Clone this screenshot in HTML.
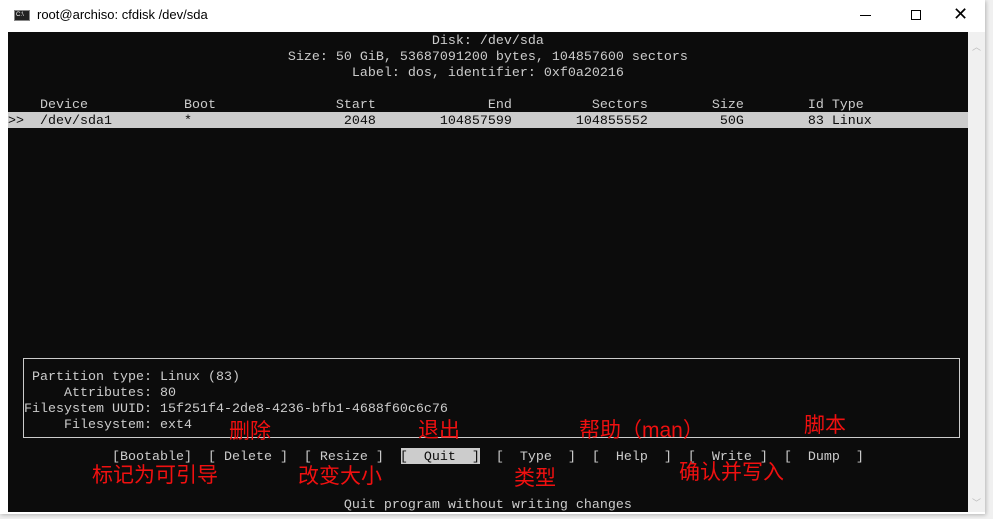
<!DOCTYPE html><html><head><meta charset="utf-8"><style>
body{margin:0;width:993px;height:519px;background:#f0f0f0;position:relative;overflow:hidden;font-family:"Liberation Sans",sans-serif}
.win{position:absolute;left:0;top:0;width:985px;height:514px;background:#fff;box-shadow:1px 1px 4px rgba(0,0,0,.25)}
.term{position:absolute;left:8px;top:32px;width:960px;height:480px;background:#0c0c0c}
.sb{position:absolute;left:968px;top:32px;width:17px;height:480px;background:#f0f0f0}
.t{position:absolute;font-family:"Liberation Mono",monospace;font-size:13.33px;line-height:16px;color:#cccccc;white-space:pre}
.r{position:absolute;color:#f01010;font-family:"Liberation Sans","Noto Sans CJK SC",sans-serif;font-size:21px;line-height:22px;white-space:pre}
</style></head><body>
<div style="position:absolute;left:0;top:36px;width:8px;height:34px;background:#fff"></div>
<div style="position:absolute;left:0;top:66px;width:8px;height:3px;background:#3a8ed8"></div>
<div class="win">
<div style="position:absolute;left:14px;top:10px;width:16px;height:11px;background:#222;border:1px solid #888;box-sizing:border-box"><span style="position:absolute;left:1px;top:0;font-size:6px;color:#fff;line-height:8px">C:\</span></div>
<div style="position:absolute;left:37px;top:7px;font-size:13px;color:#000">root@archiso: cfdisk /dev/sda</div>
<div style="position:absolute;left:860px;top:15px;width:11px;height:1px;background:#000"></div>
<div style="position:absolute;left:911px;top:10px;width:10px;height:10px;border:1px solid #000;box-sizing:border-box"></div>
<div style="position:absolute;left:953px;top:4px;font-size:18px;color:#000;line-height:20px">✕</div>
<div class="term"></div>
<div class="sb"><div style="position:absolute;left:4px;top:8px;font-size:9px;color:#bbb">︿</div><div style="position:absolute;left:4px;top:464px;font-size:9px;color:#bbb">﹀</div></div>
<div style="position:absolute;left:8px;top:112px;width:960px;height:16px;background:#cccccc"></div>
<div style="position:absolute;left:23px;top:358px;width:937px;height:80px;border:1px solid #cccccc;box-sizing:border-box"></div>
<div style="position:absolute;left:401px;top:448px;width:79px;height:16px;background:#cccccc"></div>
</div>
<div class="t" style="left:8px;top:34px">                                                     Disk: /dev/sda
                                   Size: 50 GiB, 53687091200 bytes, 104857600 sectors
                                           Label: dos, identifier: 0xf0a20216

    Device            Boot               Start              End          Sectors        Size        Id Type
<span style="color:#0c0c0c">&gt;&gt;  /dev/sda1         *                   2048        104857599        104855552         50G        83 Linux</span></div>
<div class="t" style="left:8px;top:370px">   Partition type: Linux (83)
       Attributes: 80
  Filesystem UUID: 15f251f4-2de8-4236-bfb1-4688f60c6c76
       Filesystem: ext4</div>
<div class="t" style="left:8px;top:450px">             [Bootable]  [ Delete ]  [ Resize ]  <span style="color:#0c0c0c">[  Quit  ]</span>  [  Type  ]  [  Help  ]  [  Write ]  [  Dump  ]</div>
<div class="t" style="left:8px;top:498px">                                          Quit program without writing changes</div>
<div class="r" style="left:229px;top:421px">删除</div>
<div class="r" style="left:92px;top:465px">标记为可引导</div>
<div class="r" style="left:298px;top:466px">改变大小</div>
<div class="r" style="left:418px;top:420px">退出</div>
<div class="r" style="left:514px;top:468px">类型</div>
<div class="r" style="left:579px;top:420px">帮助（man）</div>
<div class="r" style="left:679px;top:462px">确认并写入</div>
<div class="r" style="left:804px;top:415px">脚本</div>
</body></html>
